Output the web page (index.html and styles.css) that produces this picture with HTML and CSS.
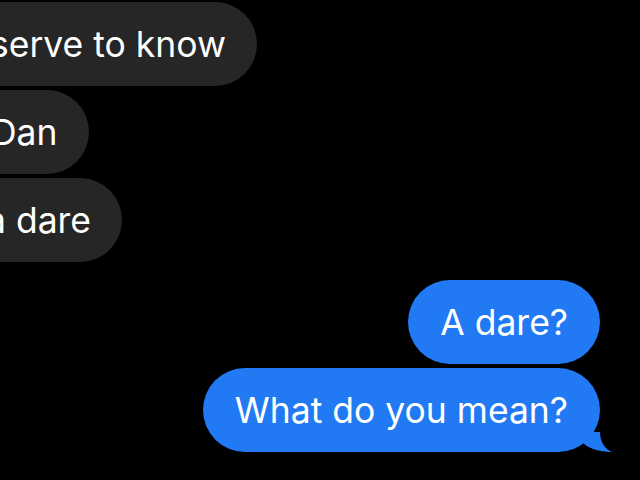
FILE: index.html
```html
<!DOCTYPE html>
<html lang="en">
<head>
  <meta charset="UTF-8" />
  <meta name="viewport" content="width=device-width, initial-scale=1.0"/>
  <title>Messages</title>
  <link rel="stylesheet" href="styles.css">
</head>
<body>
  <div class="thread">
    <!-- incoming, cut off at the left edge -->
    <div class="msg msg-in msg-a">serve to know</div>
    <div class="msg msg-in msg-b">Dan</div>
    <div class="msg msg-in msg-c">a dare</div>

    <!-- outgoing -->
    <div class="msg msg-out msg-first">A dare?</div>
    <div class="msg msg-out msg-tail">
      What do you mean?
      <svg class="tail" width="30" height="20" viewBox="0 0 30 20">
        <path d="M1 11 C8 18 22 20 30 20 C23 17 18 10 18 0 L0 0 Z" fill="#217af4"/>
      </svg>
    </div>
  </div>
</body>
</html>
```

FILE: styles.css
```css
body {
  margin: 0;
  background: #000;
  font-family: Inter, "Liberation Sans", sans-serif;
  overflow: hidden;
}
.thread {
  display: flex;
  flex-direction: column;
  gap: 4px;
  padding-top: 2px;
}
.msg {
  height: 84px;
  box-sizing: border-box;
  padding: 0 31px;
  display: flex;
  align-items: center;
  border-radius: 42px;
  font-size: 35.5px;
  color: #fff;
  white-space: nowrap;
}
.msg-in {
  align-self: flex-start;
  background: #262626;
}
.msg-a {
  margin-left: -41px;
}
.msg-b {
  margin-left: -40px;
}
.msg-c {
  margin-left: -45px;
}
.msg-out {
  align-self: flex-end;
  background: #217af4;
  margin-right: 40px;
  padding: 0 32px;
}
.msg-first {
  margin-top: 14px;
}
.msg-tail {
  position: relative;
}
.tail {
  position: absolute;
  right: -12px;
  bottom: 0;
}
```
